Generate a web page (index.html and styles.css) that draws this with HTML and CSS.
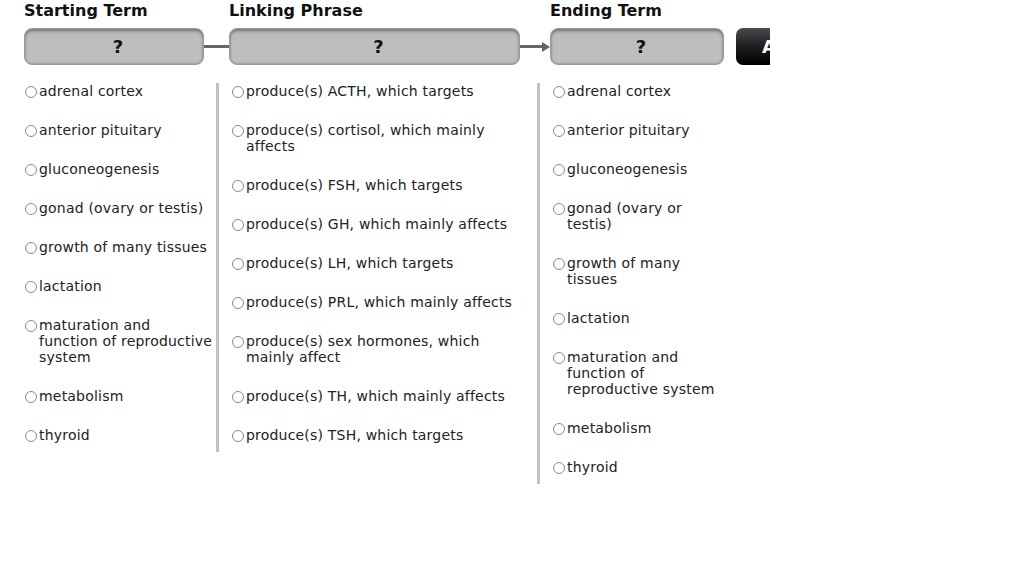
FILE: index.html
```html
<!DOCTYPE html>
<html>
<head>
<meta charset="utf-8">
<link rel="stylesheet" href="styles.css">
</head>
<body>
<div class="stage">
  <div class="heads">
    <div class="head h1">Starting Term</div>
    <div class="head h2">Linking Phrase</div>
    <div class="head h3">Ending Term</div>
  </div>
  <div class="boxes">
    <div class="slot s1">?</div>
    <div class="link"></div>
    <div class="slot s2">?</div>
    <div class="arrow"><span class="shaft"></span><span class="tip"></span></div>
    <div class="slot s3">?</div>
    <div class="btn">A</div>
  </div>
  <div class="lists">
    <ul class="list l1">
      <li><span class="radio"></span><span class="txt">adrenal cortex</span></li>
      <li><span class="radio"></span><span class="txt">anterior pituitary</span></li>
      <li><span class="radio"></span><span class="txt">gluconeogenesis</span></li>
      <li><span class="radio"></span><span class="txt">gonad (ovary or testis)</span></li>
      <li><span class="radio"></span><span class="txt">growth of many tissues</span></li>
      <li><span class="radio"></span><span class="txt">lactation</span></li>
      <li><span class="radio"></span><span class="txt">maturation and<br>function of reproductive<br>system</span></li>
      <li><span class="radio"></span><span class="txt">metabolism</span></li>
      <li><span class="radio"></span><span class="txt">thyroid</span></li>
    </ul>
    <ul class="list l2">
      <li><span class="radio"></span><span class="txt">produce(s) ACTH, which targets</span></li>
      <li><span class="radio"></span><span class="txt">produce(s) cortisol, which mainly<br>affects</span></li>
      <li><span class="radio"></span><span class="txt">produce(s) FSH, which targets</span></li>
      <li><span class="radio"></span><span class="txt">produce(s) GH, which mainly affects</span></li>
      <li><span class="radio"></span><span class="txt">produce(s) LH, which targets</span></li>
      <li><span class="radio"></span><span class="txt">produce(s) PRL, which mainly affects</span></li>
      <li><span class="radio"></span><span class="txt">produce(s) sex hormones, which<br>mainly affect</span></li>
      <li><span class="radio"></span><span class="txt">produce(s) TH, which mainly affects</span></li>
      <li><span class="radio"></span><span class="txt">produce(s) TSH, which targets</span></li>
    </ul>
    <ul class="list l3">
      <li><span class="radio"></span><span class="txt">adrenal cortex</span></li>
      <li><span class="radio"></span><span class="txt">anterior pituitary</span></li>
      <li><span class="radio"></span><span class="txt">gluconeogenesis</span></li>
      <li><span class="radio"></span><span class="txt">gonad (ovary or<br>testis)</span></li>
      <li><span class="radio"></span><span class="txt">growth of many<br>tissues</span></li>
      <li><span class="radio"></span><span class="txt">lactation</span></li>
      <li><span class="radio"></span><span class="txt">maturation and<br>function of<br>reproductive system</span></li>
      <li><span class="radio"></span><span class="txt">metabolism</span></li>
      <li><span class="radio"></span><span class="txt">thyroid</span></li>
    </ul>
  </div>
</div>
</body>
</html>
```

FILE: styles.css
```css
html, body {
  margin: 0;
  padding: 0;
  background: #ffffff;
}
body {
  font-family: "DejaVu Sans", Verdana, sans-serif;
  color: #222;
}
.stage {
  width: 746px;
  padding-left: 24px;
  overflow: hidden;
}
.heads {
  display: flex;
  height: 28px;
}
.head {
  font-size: 16px;
  font-weight: bold;
  line-height: 21px;
  color: #111;
}
.h1 { width: 205px; }
.h2 { width: 321px; }
.h3 { width: 180px; }

.boxes {
  display: flex;
  align-items: center;
  height: 37px;
}
.slot {
  box-sizing: border-box;
  height: 37px;
  border: 1px solid #9a9a9a;
  border-radius: 8px;
  background: linear-gradient(#b4b4b4, #bdbdbd 25%, #bebebe);
  box-shadow: inset 0 2px 3px rgba(0,0,0,0.35), inset 0 -1px 2px rgba(0,0,0,0.15);
  font-weight: bold;
  font-size: 18px;
  line-height: 35px;
  text-align: center;
  padding-left: 8px;
  color: #111;
  flex: none;
}
.s1 { width: 180px; }
.s2 { width: 291px; }
.s3 { width: 174px; }
.link {
  width: 25px;
  height: 3px;
  background: #666;
  flex: none;
}
.arrow {
  width: 30px;
  display: flex;
  align-items: center;
  flex: none;
}
.shaft {
  display: block;
  width: 22px;
  height: 3px;
  background: #666;
}
.tip {
  display: block;
  width: 0;
  height: 0;
  border-top: 5px solid transparent;
  border-bottom: 5px solid transparent;
  border-left: 8px solid #666;
}
.btn {
  flex: none;
  margin-left: 12px;
  width: 80px;
  height: 37px;
  box-sizing: border-box;
  border-radius: 7px;
  background: linear-gradient(#4a4a4a, #1a1a1a 55%, #000);
  color: #fff;
  font-weight: bold;
  font-size: 18px;
  line-height: 37px;
  padding-left: 26px;
}

.lists {
  display: flex;
  align-items: flex-start;
  margin-top: 18px;
}
.list {
  list-style: none;
  margin: 0;
  padding: 0 0 9px 0;
  display: flex;
  flex-direction: column;
  gap: 23px;
  font-size: 14px;
  letter-spacing: 0.2px;
  line-height: 16px;
  color: #222;
}
.l1 {
  width: 192px;
}
.l2 {
  width: 289px;
  border-left: 3px solid #c2c2c2;
  padding-left: 12px;
  padding-right: 17px;
}
.l3 {
  width: 172px;
  border-left: 3px solid #c2c2c2;
  padding-left: 12px;
}
.list li {
  display: flex;
  align-items: flex-start;
}
.radio {
  flex: none;
  box-sizing: border-box;
  width: 12px;
  height: 12px;
  margin: 3px 2px 0 1px;
  border: 1px solid #8a8a8a;
  border-radius: 50%;
  background: #fff;
}
.txt {
  white-space: nowrap;
}
```
